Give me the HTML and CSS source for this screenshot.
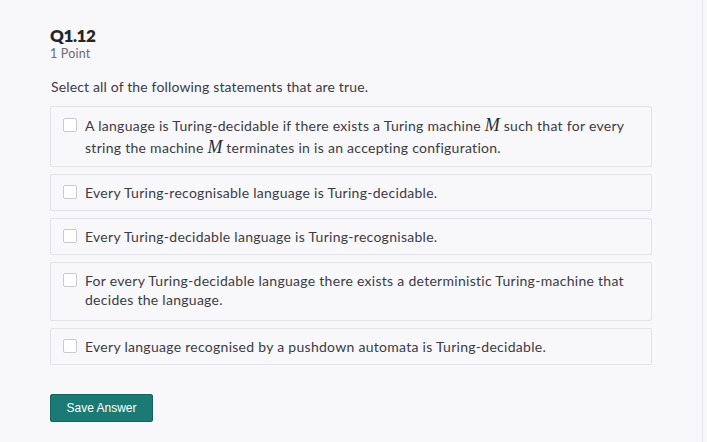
FILE: index.html
```html
<!DOCTYPE html>
<html>
<head>
<meta charset="utf-8">
<link rel="stylesheet" href="styles.css">
</head>
<body>
<div class="page">
  <div class="question">
    <h2 class="q-title">Q1.12</h2>
    <div class="q-points">1 Point</div>
    <p class="q-prompt">Select all of the following statements that are true.</p>
    <div class="options">
      <label class="option option-math">
        <span class="check"></span>
        <span class="opt-text">A language is Turing-decidable if there exists a Turing machine <span class="math">M</span> such that for every string the machine <span class="math">M</span> terminates in is an accepting configuration.</span>
      </label>
      <label class="option">
        <span class="check"></span>
        <span class="opt-text">Every Turing-recognisable language is Turing-decidable.</span>
      </label>
      <label class="option">
        <span class="check"></span>
        <span class="opt-text">Every Turing-decidable language is Turing-recognisable.</span>
      </label>
      <label class="option option-tall">
        <span class="check"></span>
        <span class="opt-text">For every Turing-decidable language there exists a deterministic Turing-machine that decides the language.</span>
      </label>
      <label class="option">
        <span class="check"></span>
        <span class="opt-text">Every language recognised by a pushdown automata is Turing-decidable.</span>
      </label>
    </div>
    <button class="save-btn">Save Answer</button>
  </div>
</div>
</body>
</html>
```
FILE: styles.css
```css
html, body {
  margin: 0;
  padding: 0;
  background: #f8f8fb;
}
body {
  font-family: "Lato", "Open Sans", sans-serif;
  color: #3b3b44;
}
.page {
  width: 702px;
  height: 442px;
  border-right: 1px solid #e6e6ec;
}
.question {
  padding: 26px 0 0 50px;
  width: 602px;
}
.q-title {
  margin: 0;
  font-size: 17px;
  font-weight: 800;
  line-height: 20px;
  letter-spacing: -0.4px;
  color: #24242b;
}
.q-points {
  font-size: 12.5px;
  line-height: 16px;
  letter-spacing: 0.2px;
  color: #6b6b74;
}
.q-prompt {
  margin: 16px 0 0 1px;
  font-size: 14px;
  line-height: 18px;
  letter-spacing: 0.15px;
  color: #3b3b44;
}
.options {
  margin-top: 10px;
  display: flex;
  flex-direction: column;
  gap: 7px;
}
.option {
  display: flex;
  align-items: flex-start;
  gap: 8px;
  padding: 8px 12px;
  background: #f8f8fb;
  border: 1px solid #e1e1e8;
  border-radius: 2px;
  font-size: 14px;
  line-height: 19px;
  letter-spacing: 0.28px;
}
.option-math {
  padding-bottom: 7px;
}
.option-tall {
  padding-bottom: 11px;
}
.option-math .opt-text {
  line-height: 22px;
}
.check {
  flex: none;
  width: 12px;
  height: 12px;
  margin-top: 2px;
  border: 1px solid #c9c9d2;
  border-radius: 2px;
  background: #fff;
}
.option-math .check {
  margin-top: 3px;
}
.opt-text {
  color: #3b3b44;
}
.math {
  display: inline-block;
  font-family: "Liberation Serif", "DejaVu Serif", serif;
  font-style: italic;
  font-size: 18px;
  line-height: 14px;
  letter-spacing: 0;
  color: #2b2b33;
}
.save-btn {
  margin-top: 29px;
  width: 103px;
  height: 28px;
  background: #1b7b74;
  border: 1px solid #15655f;
  border-radius: 2px;
  color: #fff;
  font-family: "Liberation Sans", Arial, sans-serif;
  font-size: 12px;
  padding: 0;
}
```
